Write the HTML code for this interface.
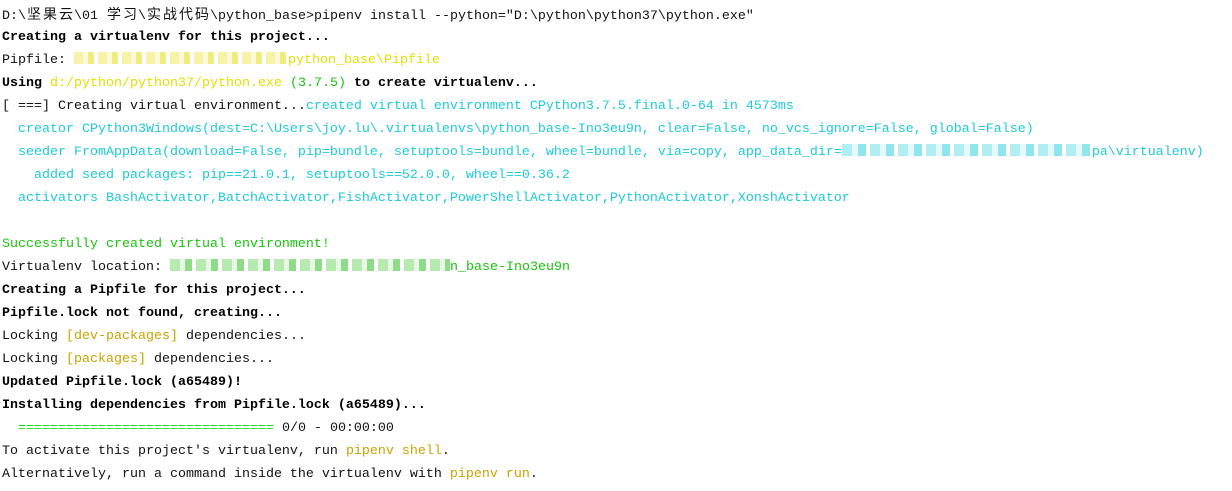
<!DOCTYPE html>
<html><head><meta charset="utf-8"><style>
html,body{margin:0;padding:0;background:#fff;width:1232px;height:491px;overflow:hidden}
.t{position:absolute;left:2px;top:3px;font-family:"Liberation Mono","Noto Sans CJK SC",monospace;font-size:13.33px;line-height:23px;color:#111}
.l{height:23px;white-space:pre;overflow:visible}
b{font-weight:bold;color:#000}
.c{font-family:"Noto Sans CJK SC",sans-serif;font-size:14px;display:inline-block;width:16px;text-align:center;line-height:23px}
.y{color:#e3df00}
.g{color:#16c60c}
.gb{color:#13e013}
.cy{color:#1ccbd8}
.o{color:#c9a200}
.bl{display:inline-block;height:12px;vertical-align:-1px}
.by{background:repeating-linear-gradient(90deg,#f6f3a8 0 9px,#fbf9d6 9px 14px,#f0ec80 14px 20px,#fff 20px 24px)}
.bc{background:repeating-linear-gradient(90deg,#b0eef2 0 10px,#e6f9fa 10px 16px,#8fe6ee 16px 24px,#fff 24px 28px)}
.bg{background:repeating-linear-gradient(90deg,#b6eab0 0 10px,#e8f8e4 10px 15px,#8edc8a 15px 22px,#fff 22px 26px)}
</style></head><body><div class="t"><div class="l">D:\<span class="c">坚</span><span class="c">果</span><span class="c">云</span>\01 <span class="c">学</span><span class="c">习</span>\<span class="c">实</span><span class="c">战</span><span class="c">代</span><span class="c">码</span>\python_base&gt;pipenv install --python="D:\python\python37\python.exe"</div><div class="l"><b>Creating a virtualenv for this project...</b></div><div class="l">Pipfile: <span class="bl by" style="width:214px"></span><span class="y">python_base\Pipfile</span></div><div class="l"><b>Using</b> <span class="y">d:/python/python37/python.exe</span> <span class="g">(3.7.5)</span> <b>to create virtualenv...</b></div><div class="l">[ ===] Creating virtual environment...<span class="cy">created virtual environment CPython3.7.5.final.0-64 in 4573ms</span></div><div class="l cy">  creator CPython3Windows(dest=C:\Users\joy.lu\.virtualenvs\python_base-Ino3eu9n, clear=False, no_vcs_ignore=False, global=False)</div><div class="l cy">  seeder FromAppData(download=False, pip=bundle, setuptools=bundle, wheel=bundle, via=copy, app_data_dir=<span class="bl bc" style="width:250px"></span>pa\virtualenv)</div><div class="l cy">    added seed packages: pip==21.0.1, setuptools==52.0.0, wheel==0.36.2</div><div class="l cy">  activators BashActivator,BatchActivator,FishActivator,PowerShellActivator,PythonActivator,XonshActivator</div><div class="l"> </div><div class="l g">Successfully created virtual environment!</div><div class="l">Virtualenv location: <span class="bl bg" style="width:280px"></span><span class="g">n_base-Ino3eu9n</span></div><div class="l"><b>Creating a Pipfile for this project...</b></div><div class="l"><b>Pipfile.lock not found, creating...</b></div><div class="l">Locking <span class="o">[dev-packages]</span> dependencies...</div><div class="l">Locking <span class="o">[packages]</span> dependencies...</div><div class="l"><b>Updated Pipfile.lock (a65489)!</b></div><div class="l"><b>Installing dependencies from Pipfile.lock (a65489)...</b></div><div class="l">  <span class="gb">================================</span> 0/0 - 00:00:00</div><div class="l">To activate this project's virtualenv, run <span class="o">pipenv shell</span>.</div><div class="l">Alternatively, run a command inside the virtualenv with <span class="o">pipenv run</span>.</div></div></body></html>
